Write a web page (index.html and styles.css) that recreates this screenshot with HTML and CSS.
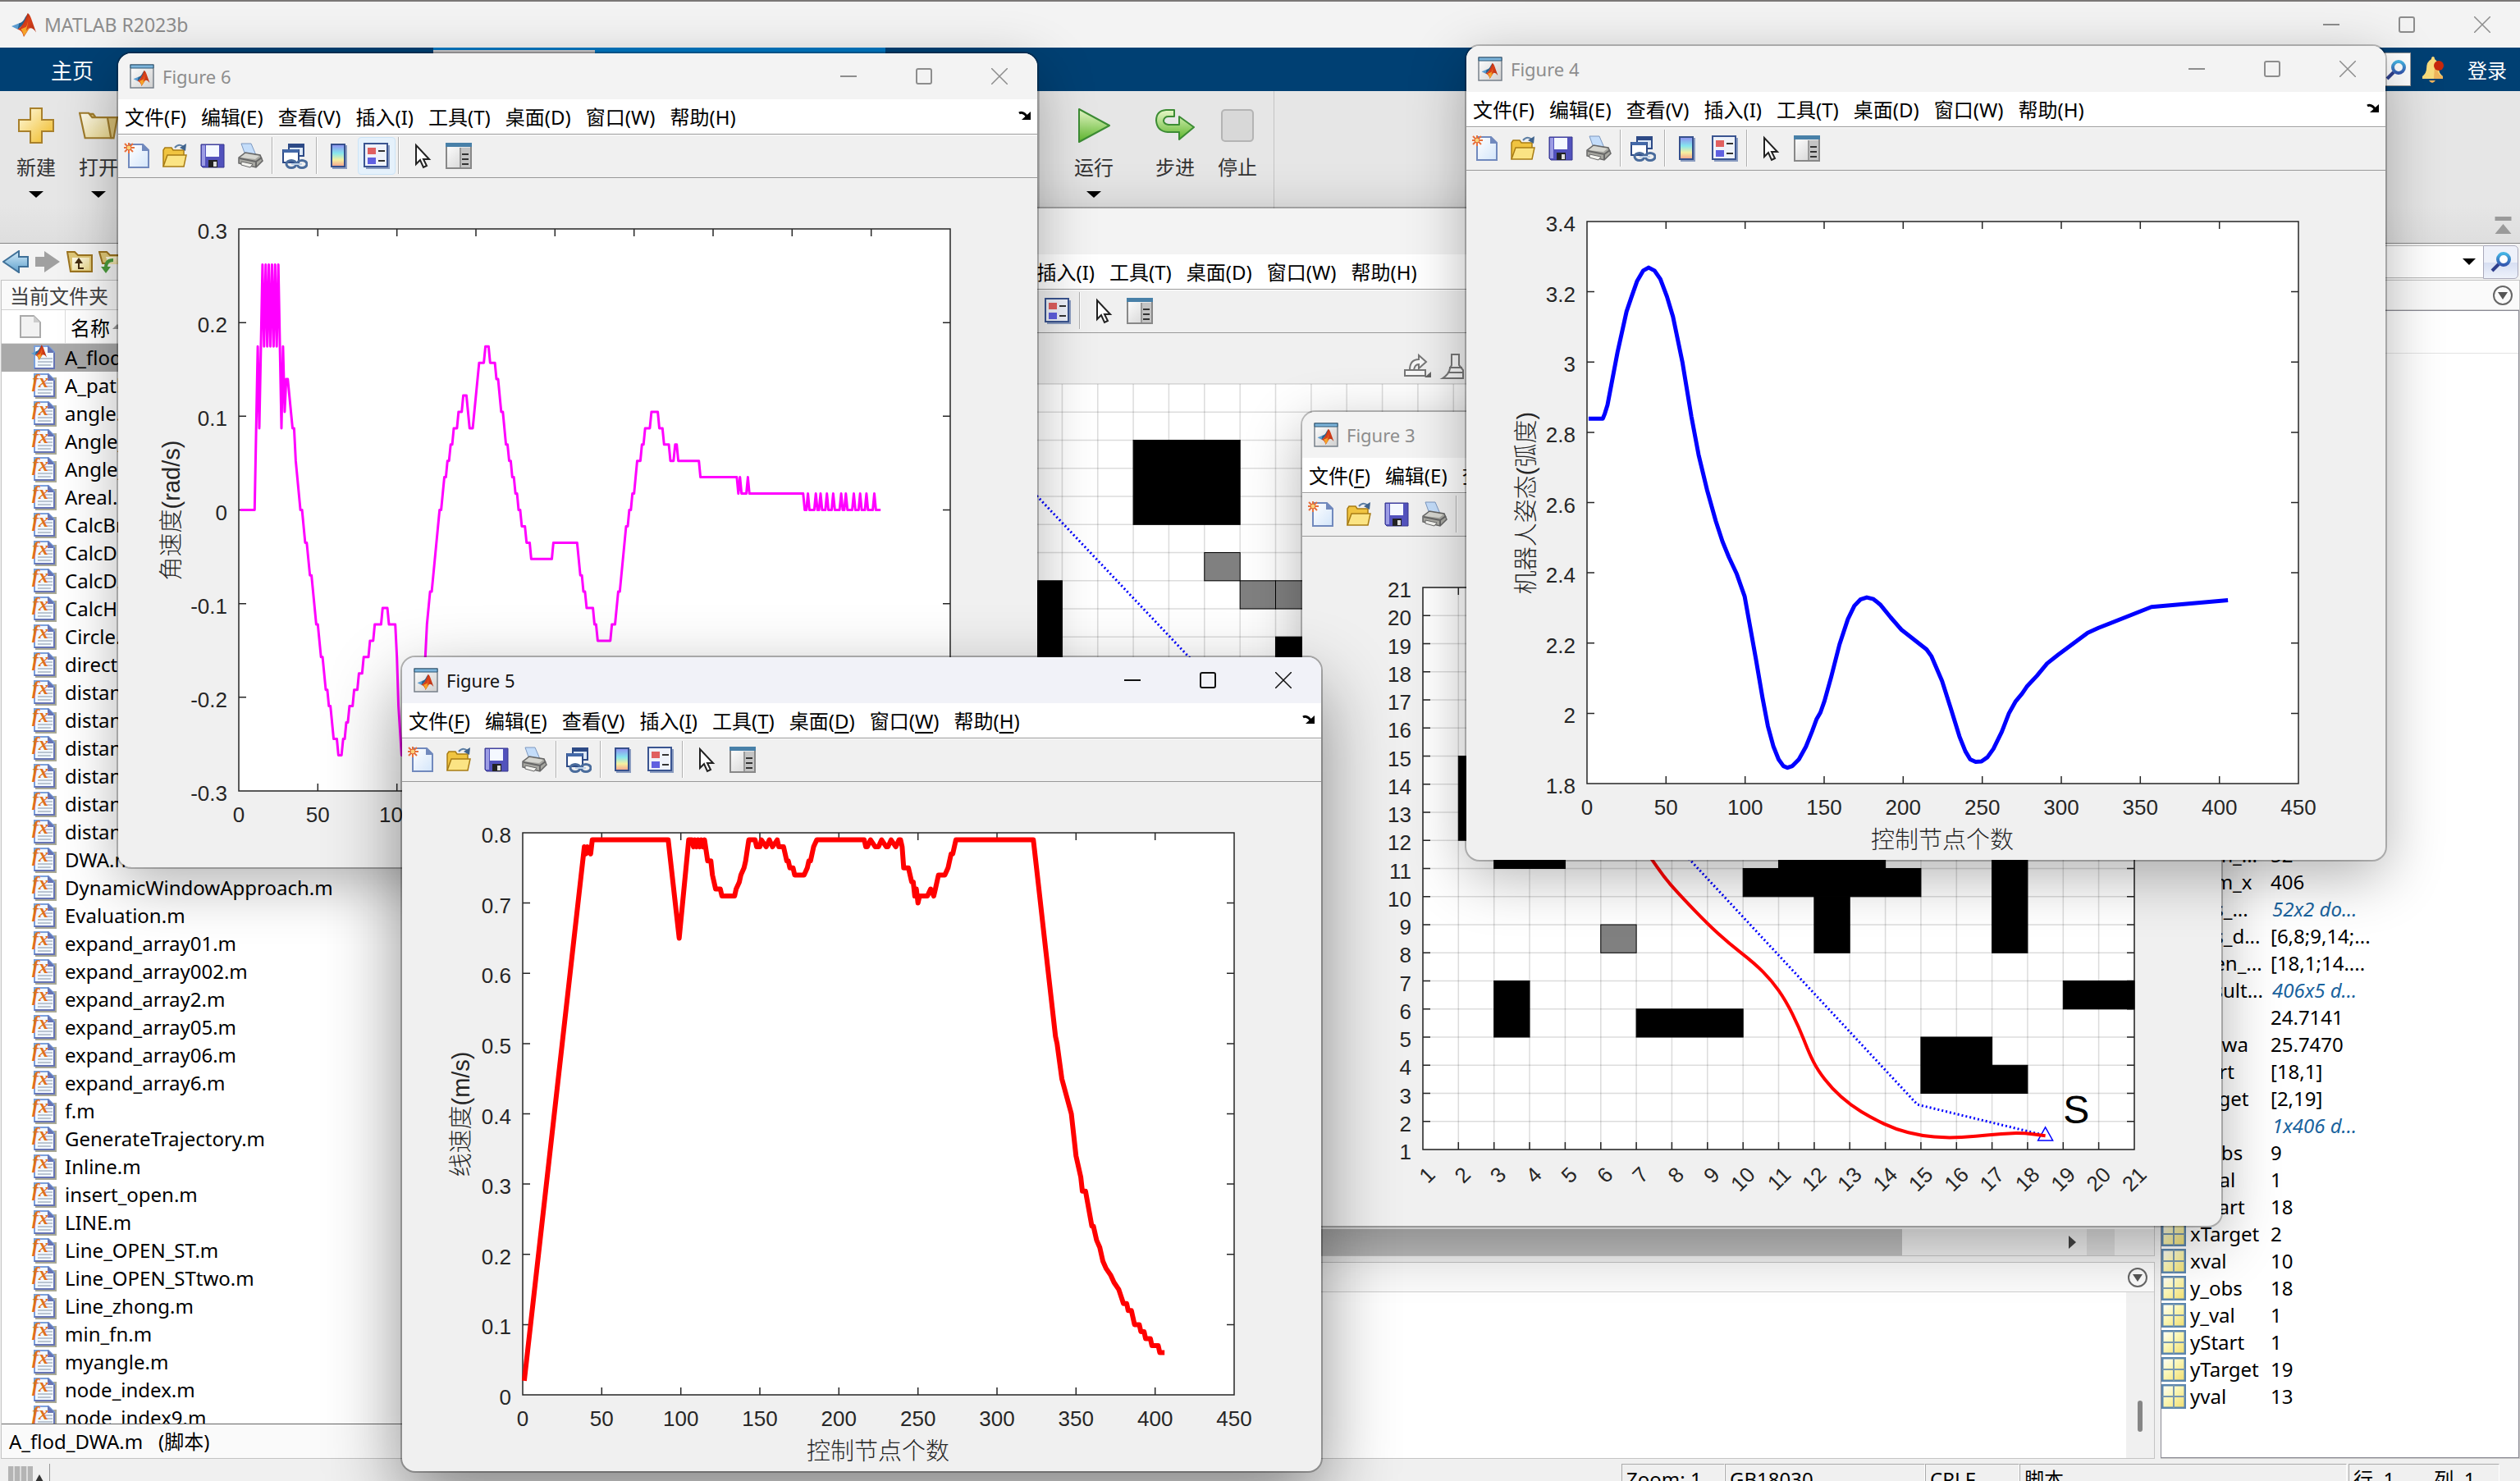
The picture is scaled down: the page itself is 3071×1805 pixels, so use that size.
FILE: index.html
```html
<!DOCTYPE html>
<html lang="zh-CN">
<head>
  <meta charset="UTF-8">
  <title>MATLAB R2023b</title>
  <link rel="stylesheet" href="styles.css">
</head>
<body>
  <!-- icon library -->
  <svg class="defs" aria-hidden="true">
    <defs>
      <linearGradient id="g-flame" x1="0" y1="0" x2="1" y2="1">
        <stop offset="0" stop-color="#7a1408"/><stop offset=".45" stop-color="#d9401a"/><stop offset="1" stop-color="#a52a12"/>
      </linearGradient>
      <linearGradient id="g-gold" x1="0" y1="0" x2="1" y2="1">
        <stop offset="0" stop-color="#fffbe0"/><stop offset="1" stop-color="#efb820"/>
      </linearGradient>
      <linearGradient id="g-folder" x1="0" y1="0" x2="1" y2="1">
        <stop offset="0" stop-color="#fffdf0"/><stop offset="1" stop-color="#e9d68a"/>
      </linearGradient>
      <linearGradient id="g-cell" x1="0" y1="0" x2="1" y2="1">
        <stop offset="0" stop-color="#fff"/><stop offset=".45" stop-color="#fbf6b4"/><stop offset="1" stop-color="#f0dc6c"/>
      </linearGradient>
      <linearGradient id="g-green" x1="0" y1="0" x2="0" y2="1">
        <stop offset="0" stop-color="#e8f8c8"/><stop offset="1" stop-color="#5cb52c"/>
      </linearGradient>
      <linearGradient id="g-page" x1="0" y1="0" x2="1" y2="1">
        <stop offset="0" stop-color="#fff"/><stop offset="1" stop-color="#d3e5fa"/>
      </linearGradient>
      <linearGradient id="g-rain" x1="0" y1="0" x2="0" y2="1">
        <stop offset="0" stop-color="#8f8df0"/><stop offset=".4" stop-color="#86e6ee"/><stop offset=".7" stop-color="#f6f0a0"/><stop offset="1" stop-color="#f4a08c"/>
      </linearGradient>
      <linearGradient id="g-blue" x1="0" y1="0" x2="0" y2="1">
        <stop offset="0" stop-color="#d4ecfa"/><stop offset="1" stop-color="#5fa0cc"/>
      </linearGradient>
      <linearGradient id="g-lens" x1="0" y1="0" x2="0" y2="1">
        <stop offset="0" stop-color="#45b4e4"/><stop offset="1" stop-color="#3458b0"/>
      </linearGradient>
      <linearGradient id="g-gray" x1="0" y1="0" x2="1" y2="1">
        <stop offset="0" stop-color="#fff"/><stop offset="1" stop-color="#cfcfcf"/>
      </linearGradient>
    </defs>
    <symbol id="matlab" viewBox="0 0 32 32">
      <path fill="#5a9bd0" d="M0 18 10 14 13 17 8 22z"/>
      <path fill="#27618f" d="M10 14Q15 13 18 6L21 2Q18 14 12 19L8 22z"/>
      <path fill="url(#g-flame)" d="M21 1Q24 2 27 12L32 26Q27 19 23 21L16 32Q14 23 8 22Q15 19 21 1z"/>
      <path fill="#f5a52a" d="M21 5Q23 12 19 19L12 22Q15 25 16 31L23 21Q22 12 21 5z"/>
      <path fill="#d9401a" d="M22 5Q25 12 23 20L19 24Q22 14 22 5z"/>
    </symbol>
    <symbol id="figicon" viewBox="0 0 30 30">
      <path fill="url(#g-gray)" stroke="#77808a" stroke-width="1.5" d="M1 1h28v28H1z"/>
      <path fill="#7db4da" stroke="#2c5674" d="M1 1h28v4H1z"/>
      <svg x="4" y="7" width="21" height="20" viewBox="0 0 32 32"><use href="#matlab"/></svg>
    </symbol>
    <symbol id="new" viewBox="0 0 32 32">
      <path fill="url(#g-page)" stroke="#7189bd" stroke-width="2" d="M6 2h17l7 7v21H6z"/>
      <path fill="#7189bd" d="M22 1v9h9z"/>
      <path stroke="#e8703c" stroke-width="2" d="M6 0v13M0 6h13M1 1l10 10M11 1 1 11"/>
      <circle cx="6" cy="6" r="3" fill="#f9d27a" stroke="#e0602c"/>
    </symbol>
    <symbol id="open" viewBox="0 0 32 32">
      <path fill="#f0c440" stroke="#a87c14" stroke-width="1.5" d="M2 28V9l2-3h8l2 3h13v19z"/>
      <path fill="#fbe484" stroke="#a87c14" stroke-width="1.5" d="M2 29 7 15h23l-3 14z"/>
      <path fill="none" stroke="#5c7ea4" stroke-width="2" d="M16 6q5-6 11-1"/>
      <path fill="#3f628c" d="m30 1-1 9-7-4z"/>
    </symbol>
    <symbol id="save" viewBox="0 0 32 32">
      <path fill="#5252bc" stroke="#34348c" d="M2 2h28v28H4l-2-2z"/>
      <path fill="#9c9ce4" d="M3 3h4v25H3z"/>
      <path fill="#f4f8ff" d="M8 3h16v14H8z"/>
      <path fill="#222" d="M11 21h11v9H11z"/><path fill="#ddd" d="M17 23h4v6h-4z"/>
    </symbol>
    <symbol id="print" viewBox="0 0 32 32">
      <path fill="#c4ddfa" stroke="#7c98c0" d="m5 1 12 0 6 14H10z"/>
      <path fill="#a8a8a2" stroke="#666" stroke-width="1.500" d="M2 18l8-6 18 3 3 7-8 8-21-5z"/>
      <path fill="#d6d6d0" d="m10 13 17 3-5 4-18-2z"/>
      <path fill="#f4f4f0" stroke="#666" d="m5 23 14 3-3 4-11-3z"/>
      <path stroke="#666" stroke-width="2" fill="none" d="m3 19 20 4 7-5M23 23v7"/>
    </symbol>
    <symbol id="link" viewBox="0 0 32 32">
      <path fill="#dce8f6" stroke="#2d4a86" stroke-width="2" d="M9 2h18v14H9z"/><path fill="#2d4a86" d="M8 1h20v5H8z"/>
      <path fill="#fff" stroke="#2d4a86" stroke-width="2" d="M2 9h19v15H2z"/><path fill="#4469a8" d="M2 8h19v4H2z"/>
      <g fill="none" stroke="#4a6c9c" stroke-width="3"><ellipse cx="12" cy="26" rx="6" ry="4.500"/><ellipse cx="25" cy="26" rx="6" ry="4.500"/></g>
      <path stroke="#bcd0e6" stroke-width="2" d="M12 26h13"/>
    </symbol>
    <symbol id="colorbar" viewBox="0 0 32 32">
      <path fill="#8a9cc0" d="M8 3h18v29H8z"/>
      <path fill="url(#g-rain)" stroke="#36508c" stroke-width="2" d="M7 2h16v27H7z"/>
    </symbol>
    <symbol id="legend" viewBox="0 0 32 32">
      <path fill="#8a9cc0" d="M3 3h29v29H3z"/>
      <path fill="#eef2fa" stroke="#3a5490" stroke-width="2" d="M1 1h28v28H1z"/>
      <path fill="#e06060" d="M5 6h10v8H5z"/><path fill="#6060e0" d="M5 18h10v8H5z"/>
      <path stroke="#333" stroke-width="2" d="M18 10h8M18 22h8"/>
    </symbol>
    <symbol id="cursor" viewBox="0 0 32 32">
      <path fill="#fff" stroke="#222" stroke-width="2" d="M10 3v23l5-5 4 9 4-2-4-8h7z"/>
    </symbol>
    <symbol id="panel" viewBox="0 0 32 32">
      <path fill="url(#g-gray)" stroke="#888" stroke-width="2" d="M1 1h30v30H1z"/>
      <path fill="#c4c4c4" d="M19 6h11v24H19z"/>
      <path fill="#4880a8" d="M0 0h32v5H0z"/>
      <path stroke="#333" stroke-width="2" d="M20 14h8M20 20h8M20 26h8"/>
      <path stroke="#999" stroke-width="2" d="M18 6v24"/>
    </symbol>
    <symbol id="min" viewBox="0 0 20 20"><path stroke="currentColor" stroke-width="2" d="M0 10h20"/></symbol>
    <symbol id="max" viewBox="0 0 20 20"><rect x="1" y="1" width="18" height="18" rx="2" fill="none" stroke="currentColor" stroke-width="2"/></symbol>
    <symbol id="close" viewBox="0 0 20 20"><path stroke="currentColor" stroke-width="1.500" d="m0 0 20 20M20 0 0 20"/></symbol>
    <symbol id="dock" viewBox="0 0 16 12"><path fill="none" stroke="#000" stroke-width="3" d="M1 3q5-3 11 6"/><path d="M15 1v10H4z"/></symbol>
    <symbol id="fx" viewBox="0 0 32 32">
      <path fill="#a9a996" d="M6 6h26v26H6z"/>
      <path fill="#f2f8ff" stroke="#7aa0dc" stroke-width="2" d="M5 2h17l7 7v20H5z"/>
      <path fill="#6674b4" d="M21 1v9h9zM28 9h2v21H5v-2h23z"/>
      <path stroke="#a8b4c4" stroke-width="1.500" d="M18 13h9M18 17h9M9 21h18M9 25h16"/>
      <text x="2" y="18" class="fx-mark">fx</text>
    </symbol>
    <symbol id="script" viewBox="0 0 32 32">
      <path fill="#f2f8ff" stroke="#7aa0dc" stroke-width="2" d="M5 2h17l7 7v20H5z"/>
      <path fill="#6674b4" d="M21 1v9h9zM28 9h2v21H5v-2h23z"/>
      <path stroke="#a8b4c4" stroke-width="1.500" d="M9 17h18M9 21h18M9 25h16"/>
      <svg x="0" y="0" width="21" height="19" viewBox="0 0 32 32"><use href="#matlab"/></svg>
    </symbol>
    <symbol id="matrix" viewBox="0 0 30 30">
      <path fill="url(#g-cell)" d="M1 1h28v28H1z"/>
      <path fill="none" stroke="#5c86ae" stroke-width="3" d="M1 1h28v28H1z"/>
      <path stroke="#7898b0" stroke-width="2" d="M15 1v28M1 15h28"/>
    </symbol>
    <symbol id="lens" viewBox="0 0 26 26">
      <path stroke="#2f3f8c" stroke-width="4" d="m2 24 8-8"/>
      <circle cx="16" cy="10" r="7" fill="#fff" stroke="url(#g-lens)" stroke-width="4"/>
    </symbol>
    <symbol id="circle-menu" viewBox="0 0 24 24">
      <circle cx="12" cy="12" r="11" fill="#fafafa" stroke="#666" stroke-width="2"/><path fill="#555" d="M6 8h12l-6 9z"/>
    </symbol>
    <symbol id="folder" viewBox="0 0 44 32">
      <path fill="#d8c078" stroke="#a07c2c" stroke-width="2" d="M8 28 6 3h10l3 4h24l-4 23z"/>
      <path fill="url(#g-folder)" stroke="#a07c2c" stroke-width="2" d="M1 2h10l4 5h17l4 23H7z"/>
    </symbol>
    <symbol id="folder-up" viewBox="0 0 32 28">
      <path fill="#e0c878" stroke="#9c7420" stroke-width="2" d="M5 26 1 2h9l4 4h17v20z"/>
      <path fill="url(#g-folder)" d="M7 9h21v15H7z"/>
      <path fill="none" stroke="#442c10" stroke-width="2" d="M15 14v8h6"/><path fill="#442c10" d="m15 9-5 7h10z"/>
    </symbol>
    <symbol id="folder-go" viewBox="0 0 32 28">
      <path fill="#e0c878" stroke="#9c7420" stroke-width="2" d="m5 16-4-14h9l4 4h17v10z"/>
      <path fill="url(#g-folder)" d="M9 8h20v9H12z"/>
      <path fill="none" stroke="#4c9c3c" stroke-width="4" d="M18 12q-9 0-9 9"/><path fill="#4c9c3c" d="M3 20h12l-6 8z"/>
    </symbol>
    <symbol id="arrow" viewBox="0 0 32 28"><path stroke-width="2" d="M1 14 20 1v7h11v12H20v7z"/></symbol>
  </svg>

  <div class="app">
    <header class="titlebar">
      <svg class="logo"><use href="#matlab"/></svg>
      <h1>MATLAB R2023b</h1>
      <div class="winbtns">
        <button aria-label="最小化"><svg><use href="#min"/></svg></button>
        <button aria-label="最大化"><svg><use href="#max"/></svg></button>
        <button aria-label="关闭"><svg><use href="#close"/></svg></button>
      </div>
    </header>

    <nav class="tabs">
      <a href="#" class="tab">主页</a>
      <div class="context-tabs"><span class="tab-active"></span></div>
      <div class="quick">
        <button class="quick-search" aria-label="搜索文档"><svg><use href="#lens"/></svg></button>
        <button class="bell" aria-label="通知">
          <svg viewBox="0 0 28 32">
            <path fill="#f9dc7c" d="M12 3q0-3 2-3t2 3q5 3 5 12 0 5 5 9v3H1v-3q5-4 5-9 0-9 6-12z"/>
            <path fill="#efb45c" d="M16 10q4 3 4 8 1 5 6 6v3H15z"/><path fill="#efb45c" d="M9 29h8q-4 6-8 0z"/>
            <circle cx="21" cy="11" r="6" fill="#c8280c"/>
          </svg>
        </button>
        <a href="#">登录</a>
      </div>
    </nav>

    <div class="toolstrip">
      <div class="group group-file">
        <button class="tool">
          <svg viewBox="0 0 44 44"><path fill="url(#g-gold)" stroke="#a8802c" stroke-width="2" d="M15 1h14v14h14v14H29v14H15V29H1V15h14z"/></svg>
          新建<i class="caret"></i>
        </button>
        <button class="tool">
          <svg><use href="#folder"/></svg>
          打开<i class="caret"></i>
        </button>
      </div>
      <div class="group group-run">
        <button class="tool run">
          <svg viewBox="0 0 44 44"><path fill="url(#g-green)" stroke="#3c8c34" stroke-width="2" stroke-linejoin="round" d="M4 2 41 22 4 42z"/></svg>
          运行<i class="caret"></i>
        </button>
        <button class="tool">
          <svg viewBox="0 0 48 44"><path fill="url(#g-green)" stroke="#3c8c34" stroke-width="2" stroke-linejoin="round" d="M23 3H13Q1 4 1 16 2 29 15 30h14v9l18-15-18-13v10H16q-6-1-6-5 1-5 6-5h7z"/></svg>
          步进
        </button>
        <button class="tool">
          <svg viewBox="0 0 44 44"><rect x="3" y="3" width="38" height="38" rx="4" fill="#d8d8d8" stroke="#b4b4b4" stroke-width="2"/></svg>
          停止
        </button>
      </div>
      <button class="collapse" aria-label="收起"><svg viewBox="0 0 20 22"><path fill="#9a9a9a" d="M0 0h20v5H0zM10 9l10 12H0z"/></svg></button>
    </div>

    <div class="address">
      <button aria-label="后退"><svg class="back"><use href="#arrow"/></svg></button>
      <button aria-label="前进"><svg class="forward" viewBox="0 0 32 28"><path d="M31 14 12 1v7H1v12h11v7z"/></svg></button>
      <button aria-label="上一级"><svg><use href="#folder-up"/></svg></button>
      <button aria-label="浏览"><svg><use href="#folder-go"/></svg></button>
      <input type="text" aria-label="当前路径">
      <button class="drop" aria-label="历史"><i class="caret"></i></button>
      <button class="find" aria-label="搜索"><svg><use href="#lens"/></svg></button>
    </div>

    <main class="desktop">
      <section class="panel files">
        <h2>当前文件夹</h2>
        <div class="cols">
          <span class="cols-icon"><svg viewBox="0 0 26 28"><path fill="#f2f2f2" stroke="#aaa" stroke-width="2" d="M1 1h16l8 8v18H1z"/><path fill="#ccc" d="M17 1v8h8z"/></svg></span>
          <span class="cols-name">名称<i class="sort"></i></span>
        </div>
        <ul id="fileList"></ul>
        <p class="details">A_flod_DWA.m&nbsp;&nbsp; (脚本)</p>
      </section>

      <div class="center">
        <section class="panel editor">
          <h2></h2>
          <div class="editor-body"></div>
          <div class="hscroll"><span class="hthumb"></span><i class="hright"></i><span class="hcorner"></span></div>
        </section>
        <section class="panel command">
          <h2><svg class="menu-dot"><use href="#circle-menu"/></svg></h2>
          <div class="command-body"><div class="vscroll"><span></span></div></div>
        </section>
      </div>

      <section class="panel vars">
        <h2><svg class="menu-dot"><use href="#circle-menu"/></svg></h2>
        <div class="vars-box">
          <div class="vars-head"></div>
          <div class="vars-body"><table id="varTable"></table></div>
        </div>
      </section>
    </main>

    <footer class="status">
      <div class="busy"><span class="bars"></span><i class="up"></i></div>
      <div class="cell zoom">Zoom: 1</div>
      <div class="cell enc">GB18030</div>
      <div class="cell eol">CRLF</div>
      <div class="cell kind">脚本</div>
      <div class="cell pos"><span>行&nbsp; 1</span><span>列&nbsp; 1</span></div>
    </footer>
  </div>

  <section class="figure fig2" data-title="Figure 2" data-plot="map"></section>
  <section class="figure fig3" data-title="Figure 3" data-plot="path"></section>
  <section class="figure fig6" data-title="Figure 6" data-plot="omega"></section>
  <section class="figure fig4" data-title="Figure 4" data-plot="pose"></section>
  <section class="figure fig5 active" data-title="Figure 5" data-plot="speed"></section>

  <template id="figureTemplate">
    <header class="fig-title">
      <svg class="fig-icon"><use href="#figicon"/></svg>
      <h2></h2>
      <div class="winbtns">
        <button aria-label="最小化"><svg><use href="#min"/></svg></button>
        <button aria-label="最大化"><svg><use href="#max"/></svg></button>
        <button aria-label="关闭"><svg><use href="#close"/></svg></button>
      </div>
    </header>
    <nav class="fig-menu">
      <button>文件(<u>F</u>)</button>
      <button>编辑(<u>E</u>)</button>
      <button>查看(<u>V</u>)</button>
      <button>插入(<u>I</u>)</button>
      <button>工具(<u>T</u>)</button>
      <button>桌面(<u>D</u>)</button>
      <button>窗口(<u>W</u>)</button>
      <button>帮助(<u>H</u>)</button>
      <svg class="dock"><use href="#dock"/></svg>
    </nav>
    <div class="fig-tools">
      <button aria-label="新建图窗"><svg><use href="#new"/></svg></button>
      <button aria-label="打开文件"><svg><use href="#open"/></svg></button>
      <button aria-label="保存图窗"><svg><use href="#save"/></svg></button>
      <button aria-label="打印图窗"><svg><use href="#print"/></svg></button>
      <span class="sep"></span>
      <button aria-label="链接绘图"><svg><use href="#link"/></svg></button>
      <span class="sep"></span>
      <button aria-label="插入颜色栏"><svg><use href="#colorbar"/></svg></button>
      <button aria-label="插入图例" class="legend"><svg><use href="#legend"/></svg></button>
      <span class="sep"></span>
      <button aria-label="编辑绘图"><svg><use href="#cursor"/></svg></button>
      <button aria-label="属性检查器"><svg><use href="#panel"/></svg></button>
    </div>
    <svg class="plot" viewBox="0 0 1120 840"></svg>
  </template>

  <script src="script.js"></script>
</body>
</html>
```

FILE: styles.css
```css
* {
  box-sizing: border-box;
}
body {
  margin: 0;
  height: 100vh;
  overflow: hidden;
  position: relative;
  font-family: "Noto Sans", "Noto Sans CJK SC", sans-serif;
  font-size: 24px;
  color: #000;
  background: #f0f0f0;
}
h1, h2, p, ul {
  margin: 0;
  padding: 0;
  font-weight: normal;
}
ul {
  list-style: none;
}
button {
  padding: 0;
  border: none;
  background: none;
  font: inherit;
  color: inherit;
}
a {
  color: inherit;
  text-decoration: none;
}
svg {
  display: block;
}
.defs {
  position: absolute;
  width: 0;
  height: 0;
}
.caret {
  width: 0;
  height: 0;
  border: 8px solid transparent;
  border-top: 8px solid #000;
  border-bottom: 0;
}

/* main window */
.app {
  height: 100%;
  display: flex;
  flex-direction: column;
  border-top: 2px solid #7a7776;
}
.titlebar {
  flex: none;
  height: 56px;
  display: flex;
  align-items: center;
  padding-left: 13px;
  gap: 9px;
  background: #f3f3f3;
  color: #8d8d8d;
}
.titlebar h1 {
  font-size: 23px;
}
.logo {
  width: 32px;
  height: 30px;
}
.winbtns {
  margin-left: auto;
  display: flex;
}
.winbtns button {
  width: 92px;
  height: 56px;
  display: flex;
  align-items: center;
  justify-content: center;
}
.winbtns svg {
  width: 20px;
  height: 20px;
}
.tabs {
  flex: none;
  height: 53px;
  display: flex;
  align-items: center;
  background: #004073;
  color: #fff;
}
.tab {
  width: 528px;
  padding-left: 62px;
  font-size: 26px;
}
.context-tabs {
  align-self: stretch;
  width: 551px;
  background: #0076c0;
}
.tab-active {
  display: block;
  width: 197px;
  height: 50px;
  margin-top: 3px;
  background: #c9c7c9;
}
.quick {
  margin-left: auto;
  display: flex;
  align-items: center;
  padding-right: 16px;
}
.quick-search {
  width: 300px;
  height: 41px;
  padding-right: 4px;
  display: flex;
  align-items: center;
  justify-content: flex-end;
  background: #fff;
  border: 1px solid #999;
}
.quick-search svg {
  width: 26px;
  height: 26px;
}
.bell svg {
  width: 28px;
  height: 32px;
  margin: 0 28px 0 13px;
}
.toolstrip {
  flex: none;
  height: 186px;
  display: flex;
  background: linear-gradient(#e6e6e6 75%, #dedede);
  border-bottom: 1px solid #888;
  color: #333;
}
.group {
  display: flex;
  align-items: flex-start;
  padding-top: 20px;
  border-right: 1px solid #c4c4c4;
}
.group-file {
  width: 1267px;
  padding-left: 6px;
}
.group-run {
  width: 286px;
  padding-left: 28px;
}
.tool {
  width: 76px;
  line-height: 34px;
  display: flex;
  flex-direction: column;
  align-items: center;
}
.tool svg {
  width: 48px;
  height: 44px;
  margin-bottom: 12px;
}
.tool.run {
  margin-right: 23px;
}
.tool .caret {
  margin-top: 12px;
  border-left-width: 9px;
  border-right-width: 9px;
}
.collapse {
  margin: auto 10px 10px auto;
}
.collapse svg {
  width: 21px;
  height: 22px;
}
.address {
  flex: none;
  height: 44px;
  display: flex;
  align-items: center;
  padding: 2px 2px 2px 3px;
  gap: 7px;
  background: #f3f3f3;
}
.address svg {
  width: 32px;
  height: 28px;
}
.back {
  fill: url(#g-blue);
  stroke: #3f7098;
}
.forward {
  fill: #a0a0a0;
}
.address input {
  flex: 1;
  height: 40px;
  margin-left: 7px;
  border: 1px solid #bbb;
  border-right: none;
  font: inherit;
}
.address .drop {
  width: 34px;
  height: 40px;
  margin-left: -7px;
  display: flex;
  align-items: center;
  justify-content: center;
  background: #fff;
  border: 1px solid #bbb;
  border-width: 1px 0;
}
.address .find {
  width: 43px;
  height: 41px;
  margin-left: -7px;
  display: flex;
  align-items: center;
  justify-content: center;
  background: linear-gradient(#eef1fa 50%, #d6def2 50%, #eef2fb);
  border: 1px solid #aab;
  border-radius: 0 5px 5px 0;
}
.address .find svg {
  width: 26px;
  height: 26px;
}

/* docked panels */
.desktop {
  flex: 1;
  min-height: 0;
  display: flex;
  gap: 7px;
  padding-left: 1px;
}
.panel {
  display: flex;
  flex-direction: column;
  background: #fff;
  border: 1px solid #c4c4c4;
}
.panel h2 {
  flex: none;
  height: 36px;
  padding: 0 8px 0 10px;
  display: flex;
  align-items: center;
  font-size: 24px;
  color: #404040;
  background: #fafafa;
  border-bottom: 1px solid #d0d0d0;
}
.menu-dot {
  width: 24px;
  height: 24px;
  margin-left: auto;
}
.files {
  width: 720px;
}
.cols {
  flex: none;
  height: 41px;
  display: flex;
  align-items: center;
  border-bottom: 1px solid #e0e0e0;
}
.cols-icon {
  width: 78px;
  height: 40px;
  padding: 6px 22px;
  border-right: 1px solid #ddd;
}
.cols-icon svg {
  width: 26px;
  height: 28px;
}
.cols-name {
  padding-left: 6px;
  display: flex;
  align-items: center;
  gap: 3px;
}
.sort {
  border: 6px solid transparent;
  border-top: 0;
  border-bottom: 6px solid #999;
}
#fileList {
  flex: 1;
  min-height: 0;
  overflow: hidden;
}
#fileList li {
  height: 34px;
  padding-left: 35px;
  display: flex;
  align-items: center;
  gap: 10px;
  line-height: 34px;
}
#fileList li.selected {
  background: #a9a9a9;
}
#fileList svg {
  width: 32px;
  height: 32px;
}
.fx-mark {
  font: italic bold 24px "Liberation Serif", serif;
  fill: #e0701c;
}
.details {
  flex: none;
  height: 42px;
  padding-left: 9px;
  line-height: 42px;
  background: #fafafa;
  border-top: 1px solid #666;
}
.center {
  flex: 1;
  display: flex;
  flex-direction: column;
  gap: 7px;
}
.editor {
  flex: 1;
}
.editor-body {
  flex: 1;
}
.hscroll {
  height: 32px;
  display: flex;
  align-items: stretch;
  padding-right: 48px;
  background: #ececec;
}
.hthumb {
  flex: 1;
  background: #bdbdbd;
}
.hright {
  align-self: center;
  margin: 0 13px 0 203px;
  border: 8px solid transparent;
  border-left: 9px solid #444;
  border-right: 0;
}
.hcorner {
  width: 34px;
  background: #dadada;
}
.command {
  flex: none;
  height: 240px;
}
.command-body {
  flex: 1;
  display: flex;
}
.vscroll {
  width: 34px;
  margin-left: auto;
  padding: 132px 14px 0;
  background: #f0f0f0;
}
.vscroll span {
  display: block;
  width: 6px;
  height: 38px;
  border-radius: 3px;
  background: #868686;
}
.vars {
  width: 438px;
  border-left: none;
  background: #f0f0f0;
}
.vars-box {
  flex: 1;
  min-height: 0;
  display: flex;
  flex-direction: column;
  background: #fff;
  border: 1px solid #8a8a94;
}
.vars-head {
  height: 52px;
  border-bottom: 1px solid #e4e4e4;
}
.vars-body {
  flex: 1;
  display: flex;
  flex-direction: column;
  justify-content: flex-end;
  padding-bottom: 58px;
}
#varTable {
  border-collapse: collapse;
}
#varTable td {
  height: 33px;
  padding: 0;
  line-height: 33px;
  white-space: nowrap;
}
#varTable td:nth-child(1) {
  width: 35px;
}
#varTable td:nth-child(2) {
  width: 98px;
}
#varTable svg {
  width: 30px;
  height: 30px;
}
#varTable .size {
  padding-left: 2px;
  font-style: italic;
  color: #1a639e;
}
.status {
  flex: none;
  height: 27px;
  overflow: hidden;
  display: flex;
  align-items: flex-start;
  padding: 6px 25px 0 10px;
}
.busy {
  display: flex;
  align-items: flex-start;
  gap: 3px;
  width: 51px;
  height: 40px;
  padding-top: 3px;
  margin-right: auto;
  border-right: 1px solid #999;
}
.bars {
  width: 30px;
  height: 30px;
  background: repeating-linear-gradient(90deg, #b4b4b4 0 6px, #dcdcdc 6px 8px);
}
.up {
  margin-top: 10px;
  border: 5px solid transparent;
  border-top: 0;
  border-bottom: 9px solid #333;
}
.cell {
  height: 40px;
  padding-left: 5px;
  line-height: 36px;
  border: 1px solid #aaa;
  border-right-color: #fff;
}
.zoom {
  width: 126px;
}
.enc {
  width: 244px;
}
.eol {
  width: 115px;
}
.kind {
  width: 399px;
}
.pos {
  width: 184px;
  margin-left: 2px;
  display: flex;
  gap: 48px;
}

/* figure windows floating above the desktop */
.figure {
  position: absolute;
  width: 1120px;
  background: #f0f0f0;
  border-radius: 16px;
  overflow: hidden;
  box-shadow: 0 0 0 2px rgba(0, 0, 0, .24), 0 20px 70px rgba(0, 0, 0, .3);
}
.figure.active {
  box-shadow: 0 0 0 2px rgba(0, 0, 0, .28), 0 36px 90px rgba(0, 0, 0, .45);
}
.fig2 {
  left: 974px;
  top: 254px;
}
.fig3 {
  left: 1587px;
  top: 502px;
}
.fig4 {
  left: 1787px;
  top: 56px;
}
.fig5 {
  left: 490px;
  top: 801px;
}
.fig6 {
  left: 144px;
  top: 65px;
}
.fig-title {
  height: 56px;
  display: flex;
  align-items: center;
  padding-left: 14px;
  gap: 10px;
  background: #f3f3f3;
  color: #8d8d8d;
}
.active .fig-title {
  background: #f1f2f8;
  color: #111;
}
.fig-title h2 {
  font-size: 22px;
}
.fig-icon {
  width: 30px;
  height: 30px;
}
.fig-menu {
  height: 43px;
  display: flex;
  align-items: center;
  gap: 18px;
  padding: 0 7px 2px 8px;
  background: #fff;
  border-bottom: 1px solid #999;
}
.fig-menu u {
  text-decoration: none;
}
.active .fig-menu u,
.fig3 .fig-menu button:first-child u {
  text-decoration: underline;
  text-underline-offset: 4px;
}
.dock {
  width: 16px;
  height: 12px;
  margin-left: auto;
}
.fig-tools {
  height: 53px;
  display: flex;
  align-items: center;
  padding-bottom: 2px;
  border-top: 1px solid #fff;
  border-bottom: 1px solid #999;
}
.fig-tools button {
  width: 46px;
  height: 46px;
  display: flex;
  align-items: center;
  justify-content: center;
}
.fig-tools svg {
  width: 32px;
  height: 32px;
}
.fig6 .legend {
  background: #e5f1fb;
  border: 1px solid #cce4f7;
  border-radius: 4px;
}
.sep {
  width: 2px;
  height: 45px;
  margin: 0 3px;
  background: #b0b0b0;
  border-right: 1px solid #fff;
}
.plot {
  width: 100%;
}

/* charts */
.axes-back {
  fill: #fff;
}
.axes-line {
  fill: none;
  stroke: #262626;
  stroke-width: 1.5;
}
.grid-line {
  stroke: #262626;
  stroke-opacity: .16;
  stroke-width: 1.5;
}
.tick-label {
  font: 26px "Liberation Sans", sans-serif;
  fill: #262626;
}
.axis-label {
  font: 300 29px "Liberation Sans", "Noto Sans CJK SC", sans-serif;
  fill: #262626;
}
.line {
  fill: none;
  stroke-linejoin: round;
}
.route {
  fill: none;
  stroke: #00f;
  stroke-width: 3;
  stroke-dasharray: 2 3;
}
.mark {
  fill: #fff;
  stroke: #00f;
  stroke-width: 1.5;
}
.start {
  font: 48px "Liberation Sans", sans-serif;
}
```

FILE: script.js
```js
const files = ['A_flod_DWA.m', 'A_path.m', 'angle.m', 'Angle_a.m', 'Angle_b.m', 'Areal.m', 'CalcBr.m',
  'CalcD1.m', 'CalcD2.m', 'CalcH.m', 'Circle.m', 'direct.m', 'distance.m', 'distance1.m', 'distance2.m',
  'distance3.m', 'distance4.m', 'distance5.m', 'DWA.m', 'DynamicWindowApproach.m', 'Evaluation.m',
  'expand_array01.m', 'expand_array002.m', 'expand_array2.m', 'expand_array05.m', 'expand_array06.m',
  'expand_array6.m', 'f.m', 'GenerateTrajectory.m', 'Inline.m', 'insert_open.m', 'LINE.m',
  'Line_OPEN_ST.m', 'Line_OPEN_STtwo.m', 'Line_zhong.m', 'min_fn.m', 'myangle.m', 'node_index.m', 'node_index9.m'];

const vars = [['num_...', '52'], ['num_x', '406'], ['obs_...', '52x2 do...', 1], ['obs_d...', '[6,8;9,14;...'],
  ['open_...', '[18,1;14....'], ['Result...', '406x5 d...', 1], ['S', '24.7141'], ['S_dwa', '25.7470'],
  ['Start', '[18,1]'], ['Target', '[2,19]'], ['x', '1x406 d...', 1], ['x_obs', '9'], ['x_val', '1'],
  ['xStart', '18'], ['xTarget', '2'], ['xval', '10'], ['y_obs', '18'], ['y_val', '1'], ['yStart', '1'],
  ['yTarget', '19'], ['yval', '13']];

document.getElementById('fileList').innerHTML = files.map((f, i) =>
  `<li${i ? '' : ' class="selected"'}><svg><use href="#${i ? 'fx' : 'script'}"/></svg>${f}</li>`).join('');

document.getElementById('varTable').innerHTML = vars.map(v =>
  `<tr><td><svg><use href="#matrix"/></svg></td><td>${v[0]}</td><td${v[2] ? ' class="size"' : ''}>${v[1]}</td></tr>`).join('');

// axes box inside the 1120x840 figure canvas
const box = { l: 147, t: 62, r: 1014, b: 747 };

// angular velocity in degrees
const omega = [1,0, 10,0, 12,10, 13,5, 15,15, 16,10, 17,15, 18,10, 19,15, 20,10, 21,15, 22,10, 23,15, 24,10, 25,15,
  27,5, 28,10, 29,6, 30,8, 31,8, 34,5, 35,5, 36,3, 39,0, 40,0, 42,-2, 43,-2, 45,-4, 46,-4, 49,-7, 50,-7,
  52,-9, 53,-9, 55,-11, 56,-11, 57,-12, 58,-12, 60,-14, 62,-14, 63,-15, 65,-15, 66,-14, 67,-14, 68,-13,
  69,-13, 70,-12, 72,-12, 73,-11, 75,-11, 76,-10, 78,-10, 79,-9, 82,-9, 83,-8, 85,-8, 86,-7, 90,-7,
  91,-6, 94,-6, 95,-7, 99,-7, 100,-9, 101,-12, 103,-15, 112,-15, 118,-9, 119,-7, 121,-5, 122,-5, 127,0,
  128,0, 130,2, 131,2, 132,3, 133,3, 134,4, 135,4, 136,5, 138,5, 139,6, 141,6, 142,7, 144,7, 146,5, 148,5,
  152,9, 155,9, 156,10, 158,10, 159,9, 162,9, 163,8, 164,8, 166,6, 167,6, 169,4, 170,4, 171,3, 172,3,
  173,2, 174,2, 175,1, 176,1, 177,0, 178,0, 179,-1, 181,-1, 182,-2, 184,-2, 185,-3, 198,-3, 199,-2,
  214,-2, 216,-4, 217,-4, 218,-5, 219,-5, 220,-6, 224,-6, 225,-7, 226,-7, 227,-8, 235,-8, 236,-7,
  238,-7, 240,-5, 241,-5, 245,-1, 246,-1, 247,0, 248,0, 249,1, 250,1, 252,3, 254,3, 255,4, 256,4, 257,5,
  260,5, 261,6, 265,6, 266,5, 268,5, 269,4, 272,4, 273,3, 275,3, 276,4, 277,4, 278,3, 291,3, 292,2,
  315,2, 316,1, 317,2, 318,1, 321,1, 322,2, 323,1, 357,1, 358,0];
[360, 365, 368, 372, 376, 381, 384, 389, 393, 397, 402].forEach(x => omega.push(x - 1, 0, x, 1, x + 1, 0));
omega.push(406, 0);

const speed = [1,.02, 39,.78, 40,.77, 41,.78, 43,.77, 44,.79, 92,.79, 99,.65, 105,.79,
  107,.79, 108,.78, 109,.79, 110,.78, 111,.79, 112,.78, 113,.79, 114,.78, 115,.79, 117,.76, 119,.76, 120,.74,
  122,.72, 125,.72, 126,.71, 134,.71, 135,.72, 137,.73, 138,.74, 140,.75, 141,.76, 143,.79, 147,.79, 148,.78, 150,.78,
  151,.79, 154,.78, 156,.79, 158,.78, 161,.79, 162,.78, 165,.78, 167,.76, 168,.76, 169,.75, 171,.75,
  172,.74, 178,.74, 180,.75, 181,.76, 182,.76, 184,.78, 186,.79, 216,.79, 217,.78, 218,.78, 220,.79,
  223,.78, 225,.78, 227,.79, 230,.78, 231,.78, 233,.79, 236,.78, 238,.79, 239,.79, 240,.78, 241,.75,
  244,.75, 246,.73, 247,.73, 248,.71, 249,.72, 250,.7, 251,.71, 256,.71, 258,.72, 260,.71, 261,.72, 263,.74,
  267,.74, 269,.75, 271,.77, 272,.77, 274,.79, 323,.79, 326,.73, 331,.63, 337,.51, 338,.5,
  341,.45, 347,.4, 350,.34, 353,.31, 354,.29, 356,.29, 360,.24, 361,.24, 363,.22, 365,.21, 367,.19,
  369,.18, 372,.17, 374,.16, 377,.15, 380,.13, 382,.13, 383,.12, 385,.12, 387,.1, 390,.1, 391,.09, 393,.09,
  394,.08, 397,.08, 398,.07, 402,.07, 403,.06, 406,.06];

const pose = [1,2.839, 10,2.839, 11.3,2.854, 13,2.878, 19.3,3.028, 25,3.144, 28,3.183, 31.7,3.231, 35.5,3.26,
  39,3.269, 42.7,3.26, 46.4,3.236, 50.6,3.186, 54.4,3.129, 60.4,2.998, 66,2.845, 70.6,2.736, 75.9,2.637,
  81.5,2.547, 85.7,2.489, 89.8,2.444, 94.8,2.396, 99.7,2.333, 102.3,2.268, 106.8,2.155, 111,2.044,
  114.4,1.964, 117.8,1.907, 121.2,1.869, 124.2,1.85, 126.8,1.845, 129.9,1.85, 134,1.869, 138.5,1.905,
  142.3,1.948, 145.3,1.984, 147.6,2.002, 150.2,2.035, 154.4,2.103, 159.7,2.196, 165,2.268, 169.1,2.306,
  172.9,2.324, 177,2.33, 181.2,2.325, 185.4,2.31, 192.1,2.273, 198.9,2.238, 214.8,2.182, 217.8,2.163,
  224.6,2.092, 229.9,2.017, 235.6,1.934, 239.3,1.892, 242.4,1.869, 245.8,1.862, 249.5,1.863, 253.3,1.875,
  257.1,1.899, 262.4,1.948, 266.9,2, 271,2.033, 275.2,2.056, 278.2,2.076, 284.6,2.107, 291,2.142,
  297.8,2.166, 316.7,2.229, 323.5,2.243, 357,2.303, 405.4,2.322];

const walked = [7,12.1, 7.44,11.32, 7.81,10.64, 8.3,9.95, 9.01,9.02, 9.59,8.35, 10.32,7.63, 10.8,7.02, 11.2,6.3,
  11.57,5.36, 11.86,4.42, 12.1,3.82, 12.5,3.17, 13.02,2.58, 13.64,2.11, 14.28,1.72, 15.01,1.49, 15.74,1.41,
  16.55,1.47, 17.28,1.57, 17.88,1.59, 18.5,1.49];

const steps = (from, to, step) => {
  const out = [];
  for (let v = from; v <= to + step / 2; v += step) out.push(+v.toFixed(2));
  return out;
};
const cells = steps(1, 21, 1);
const nodes = steps(0, 450, 50);

const plots = {
  omega: { xt: nodes, yt: steps(-0.3, 0.3, 0.1), yl: '角速度(rad/s)', yx: 65, data: omega.map((v, i) => i % 2 ? v * Math.PI / 180 : v), color: '#f0f', w: 3 },
  speed: { xt: nodes, yt: steps(0, 0.8, 0.1), yl: '线速度(m/s)', yx: 72, data: speed, color: '#f00', w: 6 },
  pose: { xt: nodes, yt: steps(1.8, 3.4, 0.2), yl: '机器人姿态(弧度)', yx: 73, data: pose, color: '#00f', w: 5 },
  path: {
    xt: cells, yt: cells, grid: true,
    black: [[2,12,3,15], [3,11,5,12], [11,11,14,12], [10,10,15,11], [12,8,13,10], [17,8,18,12], [3,5,4,7],
      [7,5,10,6], [15,3,17,5], [17,3,18,4], [19,6,21,7]],
    gray: [[6,8,7,9]],
    route: [8,12, 14.9,2.6, 18.5,1.5], data: walked, color: '#f00', w: 4, smooth: true, start: true
  },
  map: {
    xt: cells, yt: cells, grid: true, tools: true,
    black: [[7,16,10,19], [4,10,5,14], [11,10,12,12]],
    gray: [[9,14,10,15], [10,13,11,14], [11,13,12,14]],
    route: [3,18.7, 4.3,17, 9,10.7]
  }
};

function drawPlot(svg, p) {
  const x0 = p.xt[0], x1 = p.xt[p.xt.length - 1], y0 = p.yt[0], y1 = p.yt[p.yt.length - 1];
  const X = v => +(box.l + (v - x0) / (x1 - x0) * (box.r - box.l)).toFixed(1);
  const Y = v => +(box.b - (v - y0) / (y1 - y0) * (box.b - box.t)).toFixed(1);
  const pts = d => {
    const out = [];
    for (let i = 0; i < d.length; i += 2) out.push([X(d[i]), Y(d[i + 1])]);
    return out;
  };
  const rect = (r, fill) => `<rect x="${X(r[0])}" y="${Y(r[3])}" width="${X(r[2]) - X(r[0])}" height="${Y(r[1]) - Y(r[3])}" fill="${fill}" stroke="#000"/>`;
  let s = `<rect class="axes-back" x="${box.l}" y="${box.t}" width="${box.r - box.l}" height="${box.b - box.t}"/>`;

  if (p.grid) {
    p.xt.forEach(v => s += `<path class="grid-line" d="M${X(v)} ${box.t}V${box.b}"/>`);
    p.yt.forEach(v => s += `<path class="grid-line" d="M${box.l} ${Y(v)}H${box.r}"/>`);
  }
  if (!p.tools) {
    let d = `M${box.l} ${box.t}H${box.r}V${box.b}H${box.l}z`;
    p.xt.forEach(v => d += `M${X(v)} ${box.b}v-9M${X(v)} ${box.t}v9`);
    p.yt.forEach(v => d += `M${box.l} ${Y(v)}h9M${box.r} ${Y(v)}h-9`);
    s += `<path class="axes-line" d="${d}"/>`;
  }
  (p.black || []).forEach(r => s += rect(r, '#000'));
  (p.gray || []).forEach(r => s += rect(r, '#808080'));

  p.yt.forEach(v => s += `<text class="tick-label" x="133" y="${Y(v) + 12}" text-anchor="end">${v}</text>`);
  p.xt.forEach(v => {
    if (p.grid) s += `<text class="tick-label" text-anchor="end" dy="9" transform="translate(${X(v) + 10} ${box.b + 26}) rotate(-45)">${v}</text>`;
    else s += `<text class="tick-label" text-anchor="middle" x="${X(v)}" y="785">${v}</text>`;
  });
  if (p.yl) {
    s += `<text class="axis-label" text-anchor="middle" x="580" y="826">控制节点个数</text>`;
    s += `<text class="axis-label" text-anchor="middle" dy="10" transform="translate(${p.yx} 405) rotate(-90)">${p.yl}</text>`;
  }
  if (p.route) s += `<polyline class="route" points="${pts(p.route).join(' ')}"/>`;
  if (p.start) {
    const x = X(18.5), y = Y(1.5);
    s += `<path class="mark" d="M${x} ${y - 10}l9 16h-18z"/><text class="start" x="${X(19)}" y="${Y(1.94)}">S</text>`;
  }
  if (p.data) {
    const q = pts(p.data);
    let d = 'M' + q[0];
    for (let i = 1; i < q.length; i++) {
      const n = q[i + 1];
      d += p.smooth && n ? `Q${q[i]} ${(q[i][0] + n[0]) / 2},${(q[i][1] + n[1]) / 2}` : 'L' + q[i];
    }
    s += `<path class="line" stroke="${p.color}" stroke-width="${p.w}" d="${d}"/>`;
  }
  if (p.tools) {
    // axes toolbar: export and brush
    s += `<g fill="#f8f8f8" stroke="#777" stroke-width="2"><path d="M738 45h25v7h-25z"/>
      <path d="M744 45q0-13 11-13v-5l9 8-9 8v-5q-5 0-6 7z"/><path fill="#666" stroke="none" d="M770 47v7h-8z"/>
      <path d="M795 26h9v13l5 6v10h-25q8-5 9-12l2-4z"/><path d="M792 42h16M790 48h18"/></g>`;
  }
  svg.innerHTML = s;
}

const template = document.getElementById('figureTemplate');
document.querySelectorAll('.figure').forEach(win => {
  win.append(template.content.cloneNode(true));
  win.querySelector('h2').textContent = win.dataset.title;
  drawPlot(win.querySelector('.plot'), plots[win.dataset.plot]);
});
```
